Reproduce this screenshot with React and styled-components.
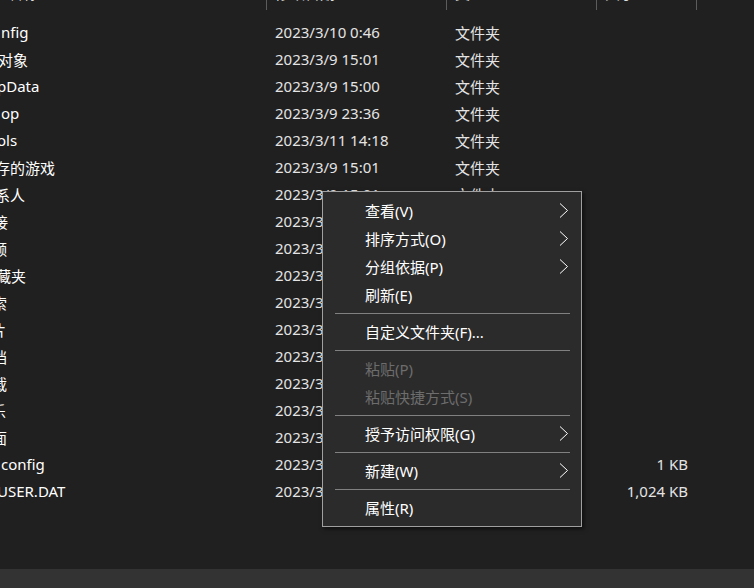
import React from "react";
import styled, { createGlobalStyle } from "styled-components";

const GlobalStyle = createGlobalStyle`
  html, body {
    margin: 0;
    padding: 0;
    background: #202020;
  }
  *, *::before, *::after {
    box-sizing: border-box;
  }
  body {
    font-family: "Noto Sans", "Noto Sans CJK SC", sans-serif;
    font-size: 15px;
    color: #ffffff;
  }
`;

const COLUMNS = "267px 180px 150px 100px 1fr";

const Window = styled.div`
  position: relative;
  width: 754px;
  height: 588px;
  display: flex;
  flex-direction: column;
  overflow: hidden;
  background: #202020;
`;

const FileArea = styled.div`
  flex: 1;
  display: flex;
  flex-direction: column;
`;

const HeaderRow = styled.div`
  display: grid;
  grid-template-columns: ${COLUMNS};
  height: 10px;
  margin-bottom: 10px;
`;

const HeaderCell = styled.div`
  display: flex;
  align-items: flex-end;
  overflow: hidden;
  padding-left: 8px;
  border-right: ${(p) => (p.$last ? "none" : "1px solid #5c5c5c")};
  color: #dedede;
  font-size: 15px;
`;

const HeaderLabel = styled.span`
  line-height: 20px;
  margin-bottom: 7px;
  white-space: nowrap;
`;

const Row = styled.div`
  display: grid;
  grid-template-columns: ${COLUMNS};
  height: 27px;
  padding-bottom: 3px;
  align-items: center;
  white-space: nowrap;
`;

const NameCell = styled.div`
  overflow: hidden;
  color: #ffffff;
  padding-left: ${(p) => p.$pad || 0}px;
`;

const NameText = styled.span`
  display: inline-block;
  margin-left: -${(p) => p.$cut || 0}px;
`;

const Cell = styled.div`
  padding-left: 8px;
  color: #e4e4e4;
`;

const SizeCell = styled.div`
  text-align: right;
  padding-right: 9px;
  color: #e4e4e4;
`;

const StatusBar = styled.div`
  height: 19px;
  background: #333333;
`;

const Menu = styled.div`
  position: absolute;
  left: 322px;
  top: 191px;
  width: 260px;
  padding: 6px 0 3px;
  background: #2b2b2b;
  border: 1px solid #a0a0a0;
  box-shadow: 2px 2px 4px rgba(0, 0, 0, 0.55);
  display: flex;
  flex-direction: column;
`;

const MenuItem = styled.div`
  height: 28px;
  display: flex;
  align-items: center;
  justify-content: space-between;
  padding: 0 12px 3px 42px;
  color: ${(p) => (p.$disabled ? "#6d6d6d" : "#ffffff")};
  font-size: 15px;
`;

const Separator = styled.div`
  height: 1px;
  margin: 3px 11px 5px 12px;
  background: #808080;
`;

const Chevron = () => (
  <svg width="10" height="15" viewBox="0 0 10 15">
    <polyline
      points="1,0.5 8.5,7.5 1,14.5"
      fill="none"
      stroke="#ffffff"
      strokeWidth="1"
    />
  </svg>
);

const files = [
  { name: "nfig", pad: 1, date: "2023/3/10 0:46", type: "文件夹" },
  { name: "对象", cut: 2, date: "2023/3/9 15:01", type: "文件夹" },
  { name: "pData", cut: 3, date: "2023/3/9 15:00", type: "文件夹" },
  { name: "op", pad: 1, date: "2023/3/9 23:36", type: "文件夹" },
  { name: "ols", cut: 3, date: "2023/3/11 14:18", type: "文件夹" },
  { name: "存的游戏", cut: 5, date: "2023/3/9 15:01", type: "文件夹" },
  { name: "系人", cut: 5, date: "2023/3/9 15:01", type: "文件夹" },
  { name: "接", cut: 7, date: "2023/3/9 15:01", type: "文件夹" },
  { name: "频", cut: 8, date: "2023/3/9 15:01", type: "文件夹" },
  { name: "藏夹", cut: 4, date: "2023/3/9 15:01", type: "文件夹" },
  { name: "索", cut: 8, date: "2023/3/9 15:01", type: "文件夹" },
  { name: "片", cut: 9, date: "2023/3/9 15:01", type: "文件夹" },
  { name: "档", cut: 8, date: "2023/3/9 15:01", type: "文件夹" },
  { name: "载", cut: 8, date: "2023/3/9 15:01", type: "文件夹" },
  { name: "乐", cut: 9, date: "2023/3/9 15:01", type: "文件夹" },
  { name: "面", cut: 8, date: "2023/3/9 15:01", type: "文件夹" },
  { name: "config", pad: 1, date: "2023/3/9 15:01", type: "CONFIG 文件", size: "1 KB" },
  { name: "USER.DAT", cut: 3, date: "2023/3/11 14:18", type: "DAT 文件", size: "1,024 KB" },
];

const menu = [
  { label: "查看(V)", sub: true },
  { label: "排序方式(O)", sub: true },
  { label: "分组依据(P)", sub: true },
  { label: "刷新(E)" },
  "sep",
  { label: "自定义文件夹(F)..." },
  "sep",
  { label: "粘贴(P)", disabled: true },
  { label: "粘贴快捷方式(S)", disabled: true },
  "sep",
  { label: "授予访问权限(G)", sub: true },
  "sep",
  { label: "新建(W)", sub: true },
  "sep",
  { label: "属性(R)" },
];

export default function App() {
  return (
    <Window>
      <GlobalStyle />
      <FileArea>
        <HeaderRow>
          <HeaderCell>
            <HeaderLabel>名称</HeaderLabel>
          </HeaderCell>
          <HeaderCell>
            <HeaderLabel>修改日期</HeaderLabel>
          </HeaderCell>
          <HeaderCell>
            <HeaderLabel>类型</HeaderLabel>
          </HeaderCell>
          <HeaderCell>
            <HeaderLabel>大小</HeaderLabel>
          </HeaderCell>
          <HeaderCell $last />
        </HeaderRow>
        {files.map((f, i) => (
          <Row key={i}>
            <NameCell $pad={f.pad}>
              <NameText $cut={f.cut}>{f.name}</NameText>
            </NameCell>
            <Cell>{f.date}</Cell>
            <Cell>{f.type}</Cell>
            <SizeCell>{f.size || ""}</SizeCell>
            <div />
          </Row>
        ))}
      </FileArea>
      <StatusBar />

      <Menu>
        {menu.map((m, i) =>
          m === "sep" ? (
            <Separator key={i} />
          ) : (
            <MenuItem key={i} $disabled={m.disabled}>
              <span>{m.label}</span>
              {m.sub && <Chevron />}
            </MenuItem>
          )
        )}
      </Menu>
    </Window>
  );
}
